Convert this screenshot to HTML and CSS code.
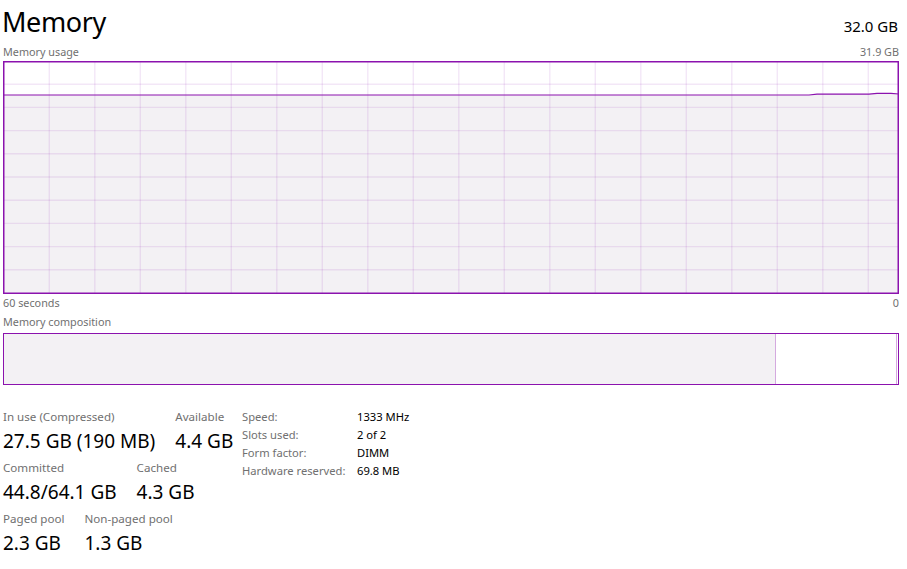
FILE: index.html
```html
<!DOCTYPE html>
<html lang="en">
<head>
<meta charset="utf-8">
<title>Memory</title>
<link rel="stylesheet" href="styles.css">
</head>
<body>
<div class="page">
  <header class="head">
    <h1 class="title">Memory</h1>
    <div class="total">32.0 GB</div>
  </header>
  <div class="caption-row first">
    <span>Memory usage</span>
    <span>31.9 GB</span>
  </div>
  <svg class="graph" width="896" height="233" viewBox="0 0 896 233" xmlns="http://www.w3.org/2000/svg">
    <rect x="0" y="0" width="896" height="233" fill="#ffffff"/>
    <polygon points="0,34 806,34 814,33.2 866,33.2 874,32.4 888,32.4 896,33 896,233 0,233" fill="#f3f1f4"/>
    <g stroke="#8b12ae" stroke-opacity="0.1" stroke-width="1.4">
      <line x1="0" y1="23.2" x2="896" y2="23.2"/>
      <line x1="0" y1="46.4" x2="896" y2="46.4"/>
      <line x1="0" y1="69.6" x2="896" y2="69.6"/>
      <line x1="0" y1="92.8" x2="896" y2="92.8"/>
      <line x1="0" y1="116" x2="896" y2="116"/>
      <line x1="0" y1="139.2" x2="896" y2="139.2"/>
      <line x1="0" y1="162.4" x2="896" y2="162.4"/>
      <line x1="0" y1="185.6" x2="896" y2="185.6"/>
      <line x1="0" y1="208.8" x2="896" y2="208.8"/>
      <line x1="46.3" y1="0" x2="46.3" y2="233"/>
      <line x1="91.8" y1="0" x2="91.8" y2="233"/>
      <line x1="137.3" y1="0" x2="137.3" y2="233"/>
      <line x1="182.8" y1="0" x2="182.8" y2="233"/>
      <line x1="228.3" y1="0" x2="228.3" y2="233"/>
      <line x1="273.8" y1="0" x2="273.8" y2="233"/>
      <line x1="319.3" y1="0" x2="319.3" y2="233"/>
      <line x1="364.8" y1="0" x2="364.8" y2="233"/>
      <line x1="410.3" y1="0" x2="410.3" y2="233"/>
      <line x1="455.8" y1="0" x2="455.8" y2="233"/>
      <line x1="501.3" y1="0" x2="501.3" y2="233"/>
      <line x1="546.8" y1="0" x2="546.8" y2="233"/>
      <line x1="592.3" y1="0" x2="592.3" y2="233"/>
      <line x1="637.8" y1="0" x2="637.8" y2="233"/>
      <line x1="683.3" y1="0" x2="683.3" y2="233"/>
      <line x1="728.8" y1="0" x2="728.8" y2="233"/>
      <line x1="774.3" y1="0" x2="774.3" y2="233"/>
      <line x1="819.8" y1="0" x2="819.8" y2="233"/>
      <line x1="865.3" y1="0" x2="865.3" y2="233"/>
    </g>
    <polyline points="0,34 806,34 814,33.2 866,33.2 874,32.4 888,32.4 896,33" fill="none" stroke="#8b12ae" stroke-width="1.2"/>
    <rect x="0.75" y="0.75" width="894.5" height="231.5" fill="none" stroke="#8b12ae" stroke-width="1.5"/>
  </svg>
  <div class="caption-row axis">
    <span>60 seconds</span>
    <span>0</span>
  </div>
  <div class="caption-row comp-label">
    <span>Memory composition</span>
  </div>
  <div class="composition">
    <div class="seg in-use"></div>
    <div class="seg standby"></div>
    <div class="seg free"></div>
  </div>
  <section class="stats">
    <div class="dynamic">
      <div class="stat-row">
        <div class="stat"><div class="stat-label">In use (Compressed)</div><div class="stat-value">27.5 GB (190 MB)</div></div>
        <div class="stat"><div class="stat-label">Available</div><div class="stat-value">4.4 GB</div></div>
      </div>
      <div class="stat-row">
        <div class="stat"><div class="stat-label">Committed</div><div class="stat-value">44.8/64.1 GB</div></div>
        <div class="stat"><div class="stat-label">Cached</div><div class="stat-value">4.3 GB</div></div>
      </div>
      <div class="stat-row">
        <div class="stat"><div class="stat-label">Paged pool</div><div class="stat-value">2.3 GB</div></div>
        <div class="stat"><div class="stat-label">Non-paged pool</div><div class="stat-value">1.3 GB</div></div>
      </div>
    </div>
    <dl class="static">
      <dt>Speed:</dt><dd>1333 MHz</dd>
      <dt>Slots used:</dt><dd>2 of 2</dd>
      <dt>Form factor:</dt><dd>DIMM</dd>
      <dt>Hardware reserved:</dt><dd>69.8 MB</dd>
    </dl>
  </section>
</div>
</body>
</html>
```
FILE: styles.css
```css
* { box-sizing: border-box; }
html, body {
  margin: 0;
  padding: 0;
  background: #ffffff;
}
body {
  font-family: "Noto Sans", "Open Sans", sans-serif;
  color: #000000;
  width: 907px;
  height: 569px;
  overflow: hidden;
}
.page {
  padding: 4px 8px 0 3px;
  display: flex;
  flex-direction: column;
}
.head {
  display: flex;
  justify-content: space-between;
  align-items: baseline;
  height: 36px;
}
.title {
  margin: 0 0 0 -1px;
  font-size: 27px;
  font-weight: 400;
  line-height: 36px;
  letter-spacing: -0.4px;
}
.total {
  font-size: 15px;
  line-height: 20px;
  margin-right: 1px;
}
.caption-row {
  display: flex;
  justify-content: space-between;
  font-size: 10.8px;
  line-height: 14px;
  color: #707070;
  margin-top: 4px;
  height: 14px;
}
.caption-row.first {
  margin-top: 5px;
}
.graph {
  display: block;
  margin-top: 2px;
}
.axis { margin-top: 2px; }
.comp-label { margin-top: 5px; }
.composition {
  margin-top: 4px;
  width: 896px;
  height: 52px;
  border: 1.5px solid #8b12ae;
  display: flex;
}
.seg { height: 100%; }
.in-use {
  width: 771.5px;
  background: #f3f1f4;
  border-right: 1.5px solid #d4aadf;
}
.standby {
  flex: 1;
  background: #ffffff;
  border-right: 1.5px solid #d4aadf;
}
.free {
  width: 1.5px;
  background: #ffffff;
}
.stats {
  margin-top: 24px;
  display: flex;
  align-items: flex-start;
}
.dynamic {
  width: 239px;
  display: flex;
  flex-direction: column;
  gap: 7px;
}
.stat-row {
  display: flex;
  gap: 20px;
}
.stat-label {
  font-size: 11.6px;
  line-height: 16px;
  color: #707070;
}
.stat-value {
  margin-top: 4px;
  font-size: 19px;
  line-height: 24px;
}
.static {
  margin: -1px 0 0 0;
  display: grid;
  grid-template-columns: 115px auto;
  align-content: start;
  font-size: 11.2px;
  line-height: 18px;
}
.static dt { color: #707070; }
.static dd { margin: 0; color: #000000; }
```
